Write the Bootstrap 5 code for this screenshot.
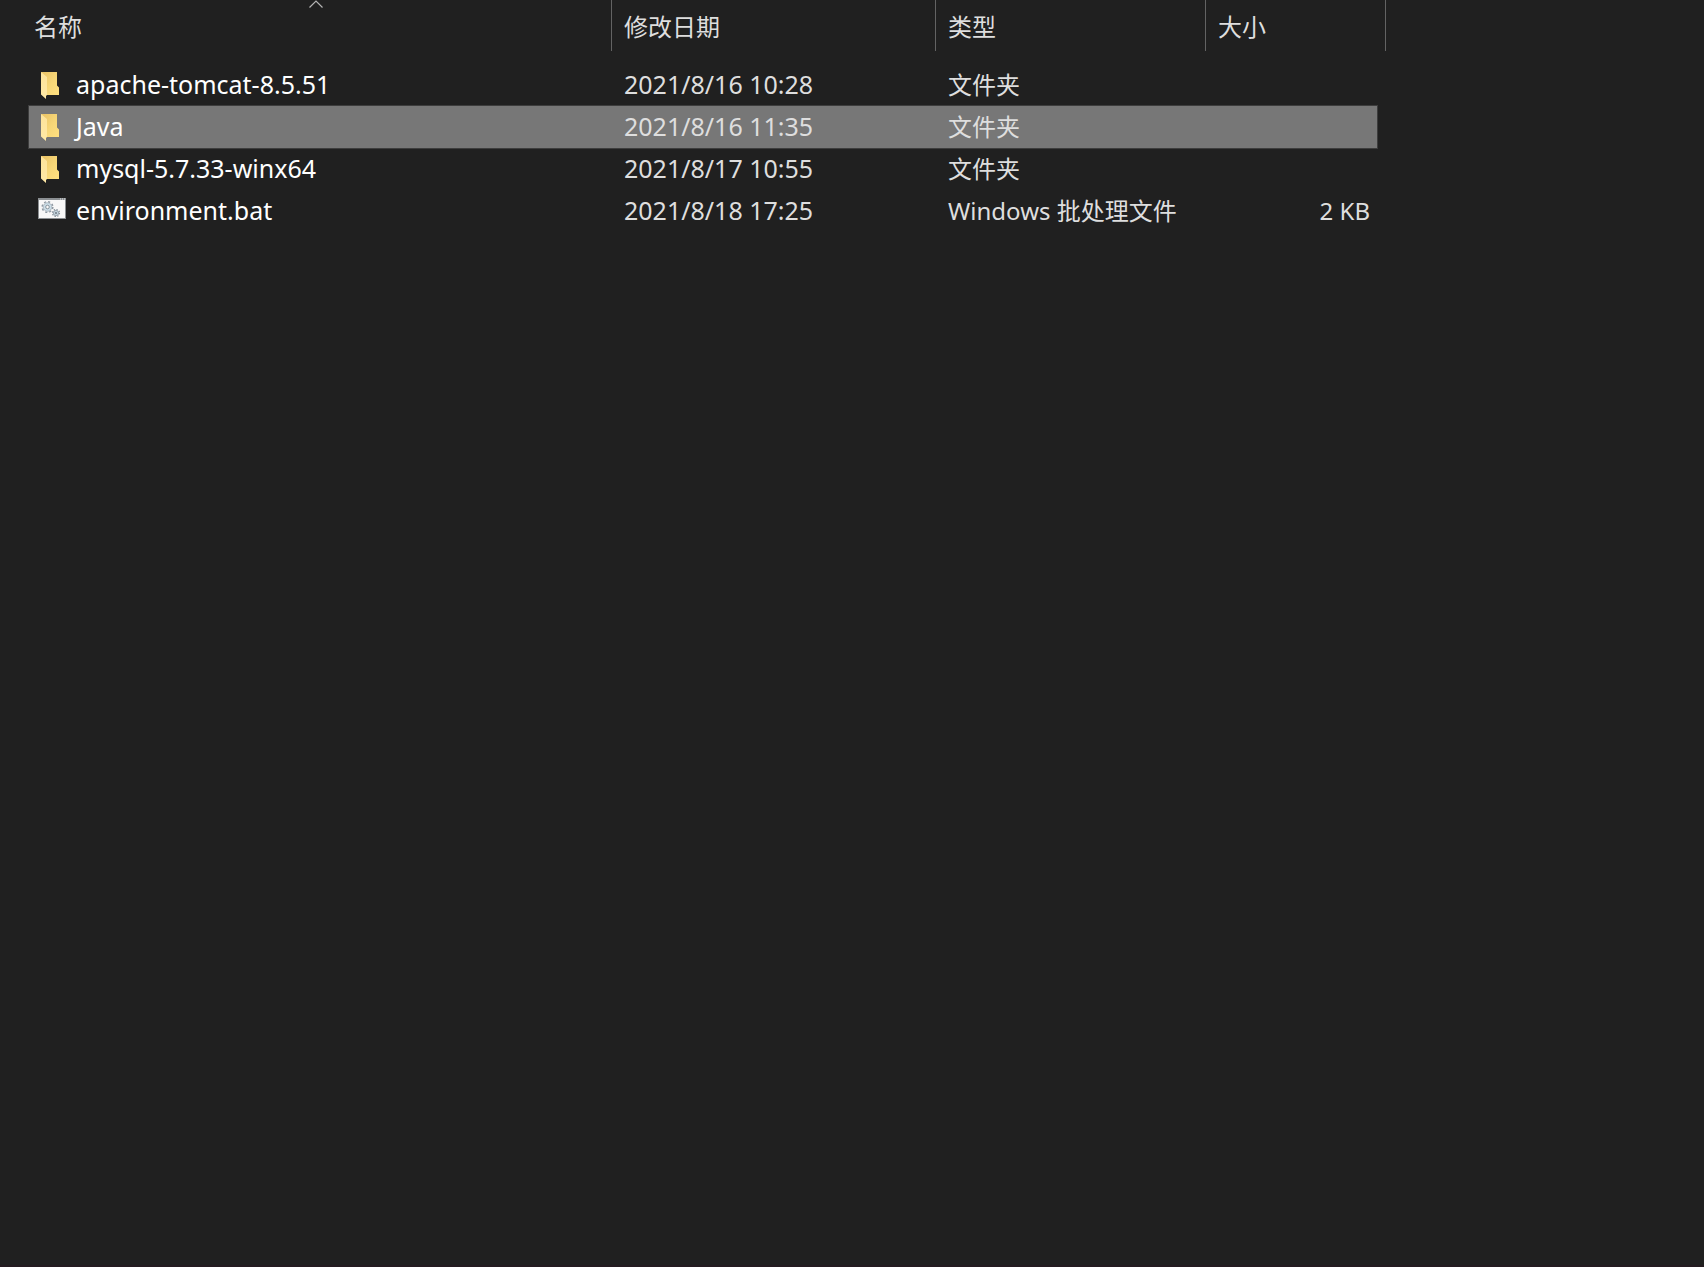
<!DOCTYPE html>
<html lang="zh-CN">
<head>
<meta charset="utf-8">
<meta name="viewport" content="width=device-width, initial-scale=1">
<title>文件资源管理器</title>
<link href="https://cdn.jsdelivr.net/npm/bootstrap@5.3.0/dist/css/bootstrap.min.css" rel="stylesheet">
<style>
  body {
    background: #202020;
    color: #dedede;
    font-family: "Noto Sans", "Noto Sans CJK SC", sans-serif;
    font-size: 24px;
    border-bottom: 2px solid #241b20;
  }
  .file-pane { padding-left: 28px; }
  .file-list { table-layout: fixed; width: 1358px; border-collapse: separate; border-spacing: 0; }
  .file-list .col-name { width: 584px; }
  .file-list .col-date { width: 324px; }
  .file-list .col-type { width: 270px; }
  .file-list .col-size { width: 172px; }
  .file-list .col-gutter { width: 8px; }
  .file-list th { height: 51px; padding: 0; border-right: 1px solid #636363; font-weight: 400; }
  .file-list th button { color: inherit; height: 51px; line-height: 51px; padding: 0 0 0 12px; font-family: "Noto Sans CJK SC", sans-serif; font-size: 24px; }
  .file-list th:first-child button { padding-left: 6px; }
  .file-list td { height: 42px; line-height: 42px; padding: 0 0 0 12px; white-space: nowrap; vertical-align: top; }
  .file-list td:first-child { padding-left: 10px; }
  .file-list td.size-cell { padding-right: 8px; }
  .file-list td.gutter-cell { padding: 0; }
  .file-list .head-gap td { height: 13px; line-height: 13px; padding: 0; }
  .file-list .latin { font-size: 25px; line-height: 40px; }
  .file-name { color: #fff; gap: 10px; }
  .file-icon { width: 28px; padding-top: 8px; }
  .folder-icon { padding-left: 3px; }
  .file-list .picked td:not(.gutter-cell) { background: #777; box-shadow: 0 -1px #3d3d3d, 0 1px #3d3d3d; }
  .file-list .picked td:first-child { border-left: 1px solid #3d3d3d; padding-left: 9px; }
  .file-list .picked td.size-cell { border-right: 1px solid #3d3d3d; }
  .sort-mark { top: 0; left: 50%; margin-left: -11px; }
</style>
<script src="https://cdn.jsdelivr.net/npm/bootstrap@5.3.0/dist/js/bootstrap.bundle.min.js"></script>
</head>
<body class="min-vh-100 overflow-x-hidden">
<svg width="0" height="0" class="position-absolute" aria-hidden="true">
  <defs>
    <linearGradient id="foldBack" x1="0" y1="0" x2="1" y2="1"><stop offset="0" stop-color="#e9c265"/><stop offset=".55" stop-color="#f7d778"/><stop offset="1" stop-color="#ffe080"/></linearGradient>
    <linearGradient id="foldFlap" x1="0" y1="0" x2="0" y2="1"><stop offset="0" stop-color="#fde39a"/><stop offset="1" stop-color="#ffe9a6"/></linearGradient>
    <symbol id="folder" viewBox="0 0 18 27">
      <path d="M0 0H16V13.500L18 15.500V23H4Z" fill="url(#foldBack)"/>
      <path d="M0 0L6 5V23L5 24V27L0 22.500Z" fill="url(#foldFlap)"/>
    </symbol>
    <symbol id="batch" viewBox="0 0 28 21">
      <path d="M0 0H28V21H0Z" fill="#8b8f92"/>
      <path d="M1 2H27V20H1Z" fill="#f8f8f8"/>
      <path d="M22 1h1M24 1h1M26 1h1" stroke="#e8e8e8"/>
      <circle cx="9.500" cy="9" r="5.300" fill="none" stroke="#8d98a1" stroke-width="1.500" stroke-dasharray="2.100 2.063"/>
      <circle cx="9.500" cy="9" r="4.300" fill="#cbdde7" stroke="#a4afb7" stroke-width=".8"/>
      <circle cx="9.500" cy="9" r="1.800" fill="#fafafa" stroke="#89959d"/>
      <circle cx="18" cy="15" r="3.500" fill="none" stroke="#84909a" stroke-width="1.200" stroke-dasharray="1.400 1.349"/>
      <circle cx="18" cy="15" r="2.700" fill="#c3d2dc" stroke="#909ca5" stroke-width=".8"/>
      <circle cx="18" cy="15" r="1.100" fill="#75818b"/>
    </symbol>
  </defs>
</svg>
<main class="file-pane">
  <table class="file-list">
    <colgroup><col class="col-name"><col class="col-date"><col class="col-type"><col class="col-size"><col class="col-gutter"></colgroup>
    <thead>
      <tr>
        <th scope="col" class="position-relative" aria-sort="ascending">
          <button type="button" class="btn border-0 rounded-0 d-block w-100 text-start">名称</button>
          <svg class="sort-mark position-absolute" width="14" height="9" viewBox="0 0 14 9" aria-hidden="true"><path d="M.5 7.500L7 1L13.500 7.500" fill="none" stroke="#b4b4b4" stroke-width="1.200"/></svg>
        </th>
        <th scope="col"><button type="button" class="btn border-0 rounded-0 d-block w-100 text-start">修改日期</button></th>
        <th scope="col"><button type="button" class="btn border-0 rounded-0 d-block w-100 text-start">类型</button></th>
        <th scope="col" colspan="2"><button type="button" class="btn border-0 rounded-0 d-block w-100 text-start">大小</button></th>
      </tr>
    </thead>
    <tbody>
      <tr class="head-gap" aria-hidden="true"><td colspan="5"></td></tr>
      <tr>
        <td><a href="#" class="file-name latin d-flex text-decoration-none"><span class="file-icon folder-icon d-flex align-items-start"><svg width="18" height="27" aria-hidden="true"><use href="#folder"/></svg></span>apache-tomcat-8.5.51</a></td>
        <td class="latin">2021/8/16 10:28</td><td>文件夹</td><td class="size-cell"></td><td class="gutter-cell"></td>
      </tr>
      <tr class="picked" aria-selected="true">
        <td><a href="#" class="file-name latin d-flex text-decoration-none"><span class="file-icon folder-icon d-flex align-items-start"><svg width="18" height="27" aria-hidden="true"><use href="#folder"/></svg></span>Java</a></td>
        <td class="latin">2021/8/16 11:35</td><td>文件夹</td><td class="size-cell"></td><td class="gutter-cell"></td>
      </tr>
      <tr>
        <td><a href="#" class="file-name latin d-flex text-decoration-none"><span class="file-icon folder-icon d-flex align-items-start"><svg width="18" height="27" aria-hidden="true"><use href="#folder"/></svg></span>mysql-5.7.33-winx64</a></td>
        <td class="latin">2021/8/17 10:55</td><td>文件夹</td><td class="size-cell"></td><td class="gutter-cell"></td>
      </tr>
      <tr>
        <td><a href="#" class="file-name latin d-flex text-decoration-none"><span class="file-icon d-flex align-items-start"><svg width="28" height="21" aria-hidden="true"><use href="#batch"/></svg></span>environment.bat</a></td>
        <td class="latin">2021/8/18 17:25</td><td>Windows 批处理文件</td><td class="size-cell text-end">2 KB</td><td class="gutter-cell"></td>
      </tr>
    </tbody>
  </table>
</main>
</body>
</html>
